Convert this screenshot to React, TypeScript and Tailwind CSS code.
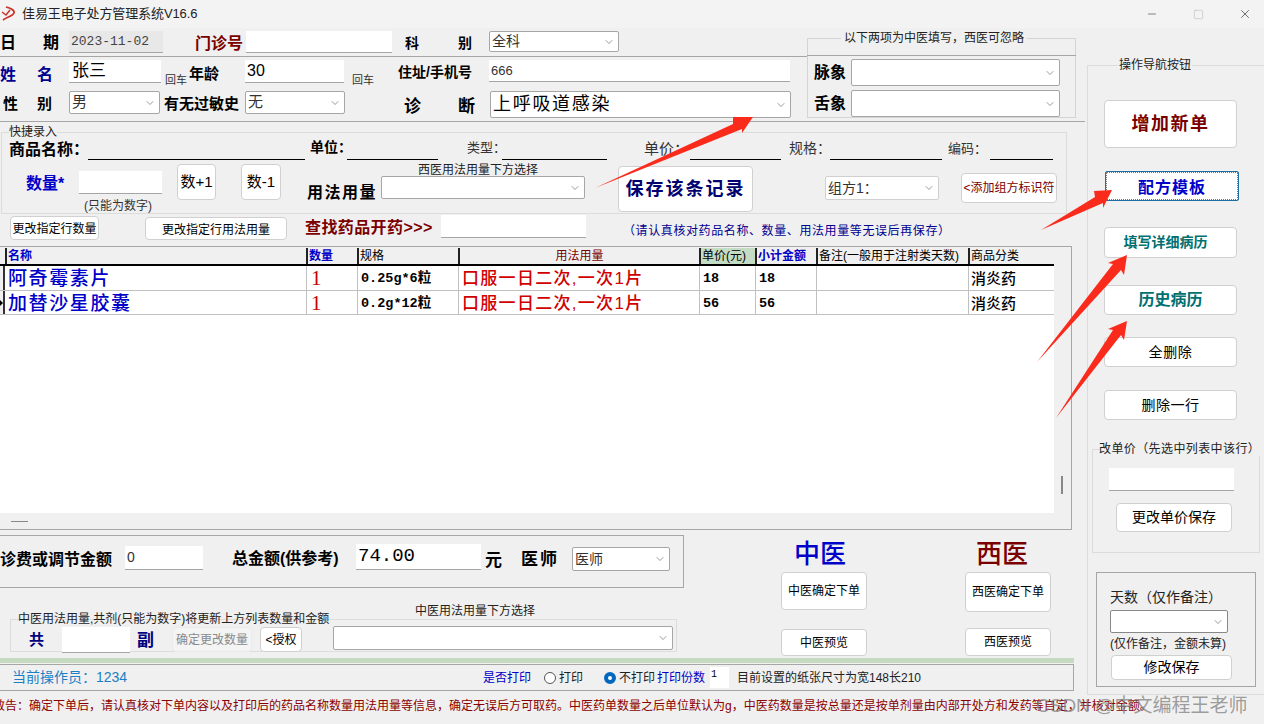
import React from "react";
import { ChevronDown, Minus, Square, X } from "lucide-react";

const MONO = "font-['Liberation_Mono','Noto_Sans_CJK_SC',monospace]";
const LINE = "border-[#a6a6a6]";

function Inp({ className = "", children }: { className?: string; children?: React.ReactNode }) {
  return <div className={`bg-white border-b ${LINE} flex items-center shrink-0 whitespace-nowrap overflow-hidden ${className}`}>{children}</div>;
}
function Sel({ className = "", children }: { className?: string; children?: React.ReactNode }) {
  return (
    <div className={`bg-white border ${LINE} rounded-[2px] flex items-center justify-between pl-[2px] pr-[3px] shrink-0 whitespace-nowrap overflow-hidden ${className}`}>
      <span>{children}</span>
      <ChevronDown size={12} strokeWidth={1.2} className="text-[#555] shrink-0" />
    </div>
  );
}
function Btn({ className = "", children }: { className?: string; children?: React.ReactNode }) {
  return <div className={`bg-white border border-[#d0d0d0] rounded-[4px] flex items-center justify-center shrink-0 whitespace-nowrap ${className}`}>{children}</div>;
}
function Spread({ a, b, className = "" }: { a: string; b: string; className?: string }) {
  return <div className={`flex justify-between shrink-0 font-bold ${className}`}><span>{a}</span><span>{b}</span></div>;
}
function T({ className = "", children }: { className?: string; children?: React.ReactNode }) {
  return <div className={`shrink-0 whitespace-nowrap ${className}`}>{children}</div>;
}

const COLS = [
  { w: "w-[301px]", head: "名称", hc: "text-[#0000c8] font-bold pl-[1px]" },
  { w: "w-[51px]", head: "数量", hc: "text-[#0000c8] font-bold pl-[1px]" },
  { w: "w-[101px]", head: "规格", hc: "text-black pl-[1px]" },
  { w: "w-[241px]", head: "用法用量", hc: "text-[#7a0000] text-center" },
  { w: "w-[56px]", head: "单价(元)", hc: "text-black bg-[#c4dcc4] pl-[1px]" },
  { w: "w-[61px]", head: "小计金额", hc: "text-[#0000c8] font-bold pl-[1px]" },
  { w: "w-[152px]", head: "备注(一般用于注射类天数)", hc: "text-black pl-[1px]" },
  { w: "w-[86px]", head: "商品分类", hc: "text-black pl-[1px]" },
];

const ROWS = [
  ["阿奇霉素片", "1", "0.25g*6粒", "口服一日二次,一次1片", "18", "18", "", "消炎药"],
  ["加替沙星胶囊", "1", "0.2g*12粒", "口服一日二次,一次1片", "56", "56", "", "消炎药"],
];

const CELL = [
  "text-[#0000c8] text-[19px] tracking-[1.6px] font-medium pl-[3px]",
  "text-[#c80000] text-[21px] pl-[4px] font-['Liberation_Serif',serif]",
  `text-black text-[13.5px] font-bold pl-[3px] ${MONO}`,
  "text-[#d00000] text-[17px] tracking-[1.3px] font-medium pl-[3px]",
  `text-black text-[13.5px] font-bold pl-[3px] ${MONO}`,
  `text-black text-[13.5px] font-bold pl-[3px] ${MONO}`,
  "",
  "text-black text-[15px] font-medium pl-[2px]",
];

function Arrow({ p }: { p: string }) {
  return <polygon points={p} fill="#fb2b1c" />;
}

export default function App() {
  return (
    <div className="relative w-[1264px] h-[724px] overflow-hidden bg-[#f0f0f0] text-black text-[12px] flex flex-col font-['Liberation_Sans','Noto_Sans_CJK_SC',sans-serif]">
      {/* Title bar */}
      <div className="h-[28px] shrink-0 bg-[#f3f3f3] flex items-center">
        <svg width="18" height="18" viewBox="0 0 18 18" className="ml-[0px]" fill="none">
          <path d="M6 2 C10 3 15 5 14 8 C13 11 7 12 3 15" stroke="#c8322a" strokeWidth="1.7" />
          <path d="M2 7 L6 10 L10 5" stroke="#c8322a" strokeWidth="1.5" />
        </svg>
        <T className="ml-[4px] text-[13px] tracking-[-0.1px] text-[#222]">佳易王电子处方管理系统V16.6</T>
        <div className="ml-auto flex items-center text-[#333]">
          <Minus size={12} strokeWidth={1.2} />
          <Square size={11} strokeWidth={1} className="ml-[35px] text-[#aaa]" />
          <X size={14} strokeWidth={1.2} className="ml-[34px] mr-[12px]" />
        </div>
      </div>

      <div className="flex flex-1 min-h-0">
        {/* Left column */}
        <div className="w-[1087px] shrink-0 flex flex-col">
          {/* Patient header */}
          <div className={`flex h-[94px] w-[1085px] border-b ${LINE} shrink-0`}>
            <div className="w-[807px] shrink-0 flex flex-col">
              <div className={`h-[29px] border-b ${LINE} flex items-center shrink-0`}>
                <Spread a="日" b="期" className="w-[59px] text-[16px] pt-[1px]" />
                <Inp className={`ml-[10px] w-[94px] h-[22px] !bg-[#e8e8e8] text-[#444] text-[13px] pl-[2px] ${MONO}`}>2023-11-02</Inp>
                <T className="ml-[32px] w-[50px] text-[16px] font-bold text-[#7a0000] pt-[3px]">门诊号</T>
                <Inp className="ml-[1px] w-[146px] h-[22px]" />
                <Spread a="科" b="别" className="ml-[13px] w-[67px] text-[14px] pt-[3px]" />
                <Sel className="ml-[17px] w-[130px] h-[21px] text-[14px] text-[#333] -mt-[1px]">全科</Sel>
              </div>
              <div className="h-[32px] flex items-start shrink-0">
                <Spread a="姓" b="名" className="w-[53px] mt-[6px] text-[16px] text-[#000090]" />
                <Inp className="ml-[16px] w-[92px] h-[23px] mt-[3px] text-[17px] pl-[3px]">张三</Inp>
                <T className="ml-[4px] w-[23px] mt-[15px] text-[11px] text-[#333]">回车</T>
                <T className="ml-[1px] w-[32px] mt-[6px] text-[15px] font-bold">年龄</T>
                <Inp className="ml-[24px] w-[99px] h-[23px] mt-[3px] text-[16px] pl-[2px]">30</Inp>
                <T className="ml-[8px] w-[23px] mt-[15px] text-[11px] text-[#333]">回车</T>
                <T className="ml-[23px] w-[88px] mt-[5px] text-[14px] font-bold">住址/手机号</T>
                <Inp className={`ml-[3px] w-[301px] h-[22px] mt-[3px] text-[13px] text-[#333] pl-[2px]`}>666</Inp>
              </div>
              <div className="h-[32px] flex items-start shrink-0">
                <Spread a="性" b="别" className="ml-[3px] w-[49px] mt-[4px] text-[15px]" />
                <Sel className="ml-[17px] w-[91px] h-[23px] mt-[2px] text-[15px] text-[#333]">男</Sel>
                <T className="ml-[4px] w-[80px] mt-[4px] text-[15px] font-bold">有无过敏史</T>
                <Sel className="ml-[1px] w-[100px] h-[23px] mt-[2px] text-[15px] text-[#333]">无</Sel>
                <Spread a="诊" b="断" className="ml-[59px] w-[71px] mt-[5px] text-[17px]" />
                <Sel className="ml-[15px] w-[301px] h-[27px] mt-[2px] text-[18px] tracking-[1.7px]">上呼吸道感染</Sel>
              </div>
            </div>
            {/* TCM group */}
            <div className="relative w-[269px] h-[80px] mt-[10px] border border-[#d4d4d4] shrink-0">
              <T className="absolute left-[33px] top-[-8px] bg-[#f0f0f0] px-[3px] text-[12px] text-[#222] leading-[14px]">以下两项为中医填写，西医可忽略</T>
              <div className={`h-[17px] border-b ${LINE} -mx-[1px]`} />
              <div className="flex items-center mt-[3px]">
                <T className="ml-[6px] w-[37px] text-[16px] font-bold">脉象</T>
                <Sel className="w-[209px] h-[27px]" />
              </div>
              <div className="flex items-center mt-[4px]">
                <T className="ml-[6px] w-[37px] text-[16px] font-bold">舌象</T>
                <Sel className="w-[209px] h-[27px]" />
              </div>
            </div>
          </div>

          {/* Quick entry group */}
          <div className="relative ml-[1px] mt-[10px] w-[1066px] h-[82px] border border-[#dcdcdc] shrink-0">
            <T className="absolute left-[7px] top-[-8px] bg-[#f0f0f0] text-[12px] leading-[14px] text-[#222]">快捷录入</T>
            <div className="h-[32px] flex items-start">
              <T className="ml-[7px] w-[79px] mt-[5px] text-[16px] font-bold">商品名称：</T>
              <div className="w-[217px] h-[1px] bg-black mt-[26px]" />
              <T className="ml-[5px] w-[37px] mt-[4px] text-[14px] font-bold">单位：</T>
              <div className="w-[91px] h-[1px] bg-black mt-[26px]" />
              <T className="ml-[29px] w-[35px] mt-[5px] text-[13px] text-[#333]">类型：</T>
              <div className="w-[105px] h-[1px] bg-black mt-[26px]" />
              <T className="ml-[37px] w-[46px] mt-[5px] text-[15px] text-[#333]">单价：</T>
              <div className="w-[91px] h-[1px] bg-black mt-[26px]" />
              <T className="ml-[8px] w-[41px] mt-[5px] text-[14px] text-[#333]">规格：</T>
              <div className="w-[112px] h-[1px] bg-black mt-[26px]" />
              <T className="ml-[6px] w-[42px] mt-[6px] text-[13px] text-[#333]">编码：</T>
              <div className="w-[63px] h-[1px] bg-black mt-[26px]" />
            </div>
            <div className="h-[48px] flex items-start">
              <T className="ml-[24px] w-[53px] mt-[7px] text-[16px] font-bold text-[#0000c8]">数量*</T>
              <div className="w-[83px] mt-[6px] shrink-0">
                <Inp className="w-[83px] h-[23px]" />
                <T className="pl-[5px] mt-[5px] text-[12px] leading-[14px] text-[#333]">(只能为数字)</T>
              </div>
              <Btn className="ml-[15px] w-[39px] h-[36px] -mt-[1px] text-[15px]">数+1</Btn>
              <Btn className="ml-[25px] w-[40px] h-[36px] -mt-[1px] text-[15px]">数-1</Btn>
              <T className="ml-[26px] w-[74px] mt-[16px] text-[16px] font-bold tracking-[1.5px]">用法用量</T>
              <div className="w-[204px] shrink-0">
                <T className="ml-[37px] h-[11px] text-[12px] leading-[11px] text-[#222]">西医用法用量下方选择</T>
                <Sel className="w-[204px] h-[23px]" />
              </div>
              <Btn className="ml-[33px] w-[135px] h-[46px] mt-[1px] text-[18px] font-bold tracking-[2px] text-[#000070]">保存该条记录</Btn>
              <Sel className="ml-[72px] w-[114px] h-[24px] mt-[11px] text-[14px] text-[#333] !border-[#d0d0d0]">组方1：</Sel>
              <Btn className="ml-[22px] w-[96px] h-[30px] mt-[8px] text-[12px] text-[#7a0000]">&lt;添加组方标识符</Btn>
            </div>
          </div>

          {/* Action row */}
          <div className="h-[32px] flex items-start pt-[2px] shrink-0">
            <Btn className="ml-[10px] w-[89px] h-[24px] text-[12px] pt-[2px]">更改指定行数量</Btn>
            <Btn className="ml-[46px] w-[142px] h-[23px] mt-[1px] text-[12px] pt-[2px]">更改指定行用法用量</Btn>
            <T className="ml-[18px] w-[129px] text-[16px] tracking-[0.4px] font-bold text-[#7a0000]">查找药品开药&gt;&gt;&gt;</T>
            <Inp className="ml-[7px] w-[145px] h-[23px] -mt-[1px]" />
            <T className="ml-[37px] mt-[6px] text-[12px] tracking-[0.6px] text-[#000090]">（请认真核对药品名称、数量、用法用量等无误后再保存）</T>
          </div>

          {/* Grid */}
          <div className={`relative w-[1072px] h-[284px] border-t border-r border-b ${LINE} shrink-0 flex flex-col`}>
            <div className="w-[1054px] h-[265px] bg-white mt-[1px] shrink-0">
              <div className="flex h-[18px] border-b-2 border-black bg-[#f0f0f0]">
                <div className="w-[5px] shrink-0" />
                {COLS.map((c) => (
                  <div key={c.head} className={`${c.w} shrink-0 border-l-2 border-[#222] text-[12px] leading-[16px] whitespace-nowrap overflow-hidden ${c.hc}`}>{c.head}</div>
                ))}
              </div>
              {ROWS.map((r, ri) => (
                <div key={ri} className={`flex border-b border-[#c0c0c0] ${ri === 0 ? "h-[25px]" : "h-[24px]"}`}>
                  <div className="w-[5px] shrink-0 bg-[#f0f0f0] border-r-2 border-[#333] flex items-center">
                    {ri === 1 && <div className="w-0 h-0 border-y-[3px] border-y-transparent border-l-[3px] border-l-black" />}
                  </div>
                  {COLS.map((c, i) => (
                    <div key={i} className={`${c.w} shrink-0 ${i > 0 ? "border-l border-[#c0c0c0]" : ""} leading-[25px] whitespace-nowrap overflow-hidden ${CELL[i]}`}>{r[i]}</div>
                  ))}
                </div>
              ))}
            </div>
            <div className="ml-[11px] mt-[8px] w-[17px] h-[1px] bg-[#888]" />
            <div className="absolute left-[1061px] top-[229px] w-[2px] h-[18px] bg-[#888]" />
          </div>

          {/* Totals and order */}
          <div className="h-[128px] flex shrink-0">
            <div className="w-[700px] shrink-0 flex flex-col">
              <div className={`mt-[5px] w-[684px] h-[53px] border-t border-r border-b ${LINE} flex items-start shrink-0`}>
                <T className="w-[118px] mt-[12px] text-[16px] font-bold">诊费或调节金额</T>
                <Inp className="ml-[7px] w-[78px] h-[24px] mt-[10px] text-[14px] text-[#333] pl-[2px]">0</Inp>
                <T className="ml-[29px] w-[118px] mt-[11px] text-[16px] font-bold">总金额(供参考)</T>
                <Inp className={`ml-[6px] w-[125px] h-[26px] mt-[8px] text-[19px] pl-[2px] ${MONO}`}>74.00</Inp>
                <T className="ml-[4px] w-[18px] mt-[12px] text-[17px] font-bold">元</T>
                <T className="ml-[18px] w-[39px] mt-[11px] text-[17px] font-bold tracking-[2px]">医师</T>
                <Sel className="ml-[12px] w-[98px] h-[24px] mt-[11px] text-[14px] text-[#333]">医师</Sel>
              </div>
              <div className="relative ml-[10px] mt-[31px] w-[667px] h-[33px] border border-[#dcdcdc] flex items-start shrink-0">
                <T className="absolute left-[7px] top-[-8px] text-[12px] leading-[14px] text-[#222]">中医用法用量,共剂(只能为数字)将更新上方列表数量和金额</T>
                <T className="absolute left-[404px] top-[-16px] text-[12px] leading-[14px] text-[#222]">中医用法用量下方选择</T>
                <T className="ml-[18px] w-[15px] mt-[9px] text-[15px] font-bold text-[#000080]">共</T>
                <Inp className="ml-[18px] w-[68px] h-[26px] mt-[7px]" />
                <T className="ml-[7px] w-[17px] mt-[8px] text-[17px] font-bold text-[#000080]">副</T>
                <Btn className="ml-[18px] w-[80px] h-[25px] mt-[7px] text-[12px] !bg-[#f4f4f4] !border-[#eaeaea] text-[#8a8a8a]">确定更改数量</Btn>
                <Btn className="ml-[8px] w-[42px] h-[25px] mt-[7px] text-[12px]">&lt;授权</Btn>
                <Sel className="ml-[31px] w-[340px] h-[24px] mt-[6px]" />
              </div>
            </div>
            <div className="ml-[81px] w-[86px] shrink-0 flex flex-col items-center">
              <T className="mt-[9px] mr-[8px] h-[33px] text-[26px] leading-[30px] text-[#0000c8] font-medium">中医</T>
              <Btn className="w-[86px] h-[38px] text-[12px]">中医确定下单</Btn>
              <Btn className="w-[86px] h-[27px] mt-[19px] text-[12px]">中医预览</Btn>
            </div>
            <div className="ml-[98px] w-[86px] shrink-0 flex flex-col items-center">
              <T className="mt-[9px] mr-[12px] h-[33px] text-[26px] leading-[30px] text-[#7a0000] font-medium">西医</T>
              <Btn className="w-[86px] h-[40px] text-[12px]">西医确定下单</Btn>
              <Btn className="w-[86px] h-[28px] mt-[16px] text-[12px]">西医预览</Btn>
            </div>
          </div>

          <div className="w-[1074px] h-[5px] bg-[#c5dac1] shrink-0" />
          <div className={`w-[1074px] h-[27px] mt-[1px] border-t border-r border-b ${LINE} flex items-center shrink-0`}>
            <T className="ml-[12px] w-[128px] text-[14px] text-[#1a7fc4]">当前操作员：1234</T>
            <T className="ml-[343px] w-[48px] text-[12px] text-[#0000c8]">是否打印</T>
            <div className="ml-[13px] w-[12px] h-[12px] rounded-full border border-[#555] bg-white shrink-0" />
            <T className="ml-[3px] w-[24px] text-[12px] text-[#222]">打印</T>
            <div className="ml-[21px] w-[12px] h-[12px] rounded-full border-[4px] border-[#0067c0] bg-white shrink-0" />
            <T className="ml-[3px] w-[38px] text-[12px] text-[#222]">不打印</T>
            <T className="w-[53px] text-[12px] text-[#0000c8]">打印份数</T>
            <Inp className={`w-[19px] h-[21px] !border-b-0 text-[10px] !items-start pl-[1px] ${MONO}`}>1</Inp>
            <T className="ml-[8px] text-[12px] text-[#222]">目前设置的纸张尺寸为宽148长210</T>
          </div>
          <T className="-ml-[7px] mt-[8px] text-[12px] leading-[14px] text-[#8a0000]">敬告：确定下单后，请认真核对下单内容以及打印后的药品名称数量用法用量等信息，确定无误后方可取药。中医药单数量之后单位默认为g，中医药数量是按总量还是按单剂量由内部开处方和发药等自定，并核对金额。</T>
        </div>

        {/* Right column */}
        <div className="w-[177px] shrink-0">
          <div className="relative mt-[37px] h-[630px] border-l border-t border-b border-[#dcdcdc] flex flex-col items-start">
            <T className="absolute left-[30px] top-[-8px] bg-[#f0f0f0] px-[1px] text-[12px] leading-[14px] text-[#222]">操作导航按钮</T>
            <Btn className="ml-[16px] mt-[34px] w-[133px] h-[48px] text-[18px] tracking-[1.5px] font-bold text-[#7a0000] pt-[1px]">增加新单</Btn>
            <Btn className="ml-[17px] mt-[23px] w-[134px] h-[30px] text-[16px] tracking-[1px] font-bold text-[#0000c8] !border-[#1c6ea4] !rounded-[2px] outline-1 -outline-offset-2 outline-dotted outline-[#777] pt-[3px]">配方模板</Btn>
            <Btn className="ml-[16px] mt-[26px] w-[133px] h-[31px] text-[14px] font-bold text-[#007070] pr-[10px]">填写详细病历</Btn>
            <Btn className="ml-[16px] mt-[27px] w-[133px] h-[30px] text-[16px] font-bold text-[#007070]">历史病历</Btn>
            <Btn className="ml-[16px] mt-[22px] w-[133px] h-[30px] text-[14px] tracking-[0.6px]">全删除</Btn>
            <Btn className="ml-[16px] mt-[23px] w-[133px] h-[30px] text-[14px] tracking-[0.5px]">删除一行</Btn>
            <div className="relative ml-[4px] mt-[29px] w-[168px] h-[104px] border border-[#dcdcdc] flex flex-col items-start shrink-0">
              <T className="absolute left-[6px] top-[-8px] bg-[#f0f0f0] text-[12px] leading-[14px] text-[#222] tracking-[0.4px]">改单价（先选中列表中该行）</T>
              <Inp className="ml-[16px] mt-[18px] w-[125px] h-[23px]" />
              <Btn className="ml-[23px] mt-[12px] w-[116px] h-[29px] text-[14px]">更改单价保存</Btn>
            </div>
            <div className={`ml-[8px] mt-[19px] w-[160px] h-[115px] border ${LINE} flex flex-col items-start shrink-0`}>
              <T className="ml-[13px] mt-[14px] h-[23px] text-[14px] leading-[20px] text-[#222]">天数（仅作备注）</T>
              <Sel className="ml-[13px] w-[118px] h-[23px] !border-[#888]" />
              <T className="ml-[13px] mt-[2px] h-[18px] text-[12px] leading-[18px] text-[#222]">(仅作备注，金额未算)</T>
              <Btn className="ml-[14px] mt-[2px] w-[121px] h-[25px] text-[14px]">修改保存</Btn>
            </div>
          </div>
        </div>
      </div>

      {/* Annotation arrows drawn over the window */}
      <svg className="absolute inset-0 pointer-events-none" width="1264" height="724" viewBox="0 0 1264 724">
        <Arrow p="595,188 733,124 733,117 753,117 742,133 742,129" />
        <Arrow p="1041,230 1095,197 1094,191 1112,190 1103,208 1103,203" />
        <Arrow p="1037,362 1113,264 1108,263 1127,255 1124,275 1121,270" />
        <Arrow p="1056,418 1113,330 1108,329 1127,321 1124,340 1121,335" />
      </svg>

      {/* Watermark */}
      <div className="absolute left-[1036px] top-[693px] text-[19px] leading-[26px] whitespace-nowrap text-[#808080]/75">CSDN @中文编程王老师</div>
    </div>
  );
}
